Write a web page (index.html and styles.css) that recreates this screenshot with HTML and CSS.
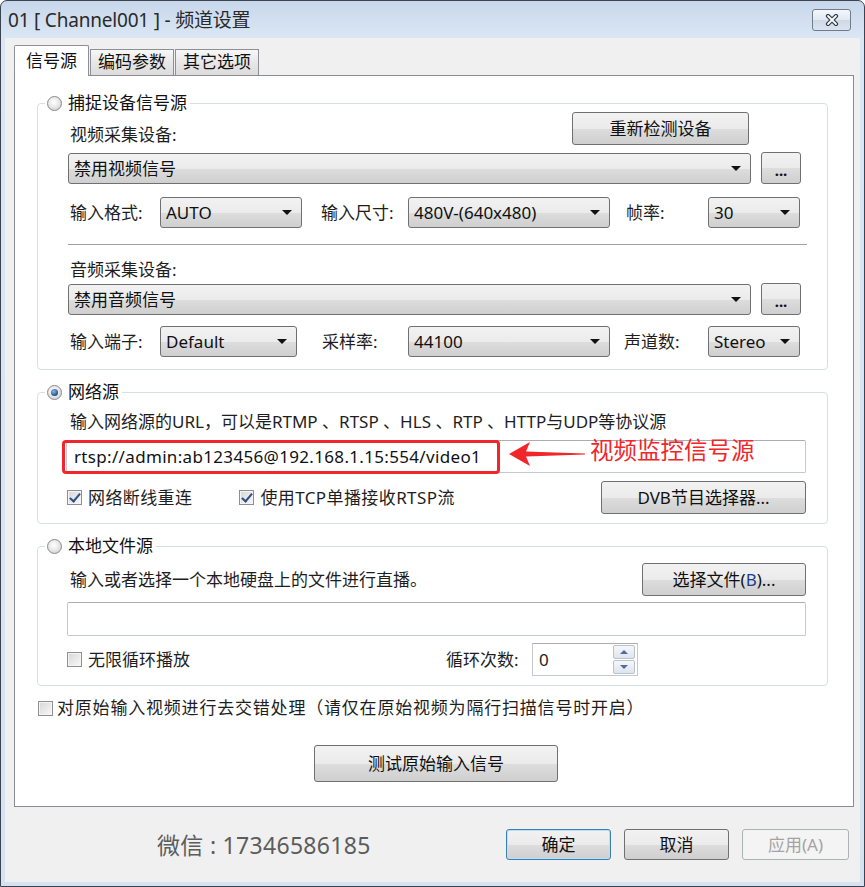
FILE: index.html
```html
<!DOCTYPE html>
<html lang="zh-CN">
<head>
  <meta charset="UTF-8" />
  <meta name="viewport" content="width=device-width, initial-scale=1.0"/>
  <title>01 [ Channel001 ] - 频道设置</title>
  <link rel="stylesheet" href="styles.css">
</head>
<body>

<div class="window">
  <div class="titlebar">
    <span class="title">01 [ Channel001 ] - 频道设置</span>
    <button class="close-btn">
      <svg width="14" height="12" viewBox="0 0 14 12">
        <path d="M3 2 L11 10 M11 2 L3 10" stroke="#2f3846" stroke-width="4.2" stroke-linecap="round"/>
        <path d="M3 2 L11 10 M11 2 L3 10" stroke="#ffffff" stroke-width="1.8" stroke-linecap="round"/>
      </svg>
    </button>
  </div>

  <div class="client">
    <div class="tabs">
      <div class="tab active">信号源</div>
      <div class="tab">编码参数</div>
      <div class="tab">其它选项</div>
    </div>

    <div class="panel">

      <!-- Capture device -->
      <fieldset class="group">
        <legend><span class="radio"></span>捕捉设备信号源</legend>
        <div class="group-body capture-body">
          <div class="head-row">
            <span>视频采集设备:</span>
            <button class="btn btn-detect">重新检测设备</button>
          </div>
          <div class="device-row">
            <div class="combo combo-wide">禁用视频信号</div>
            <button class="btn btn-more">...</button>
          </div>
          <div class="param-row">
            <span class="plabel pl-1">输入格式:</span>
            <div class="combo">AUTO</div>
            <span class="plabel pl-2">输入尺寸:</span>
            <div class="combo">480V-(640x480)</div>
            <span class="plabel pl-3">帧率:</span>
            <div class="combo">30</div>
          </div>

          <div class="separator"></div>

          <div class="sub-label">音频采集设备:</div>
          <div class="device-row audio-device">
            <div class="combo combo-wide">禁用音频信号</div>
            <button class="btn btn-more">...</button>
          </div>
          <div class="param-row">
            <span class="plabel pl-1">输入端子:</span>
            <div class="combo combo-short">Default</div>
            <span class="plabel pl-2b">采样率:</span>
            <div class="combo">44100</div>
            <span class="plabel pl-3b">声道数:</span>
            <div class="combo">Stereo</div>
          </div>
        </div>
      </fieldset>

      <!-- Network source -->
      <fieldset class="group group-gap">
        <legend><span class="radio checked"></span>网络源</legend>
        <div class="group-body net-body">
          <div class="hint">输入网络源的URL，可以是RTMP 、RTSP 、HLS 、RTP 、HTTP与UDP等协议源</div>
          <div class="url-wrap">
            <div class="textbox url-box">rtsp://admin:ab123456@192.168.1.15:554/video1</div>
            <div class="mark-box"></div>
            <svg class="mark-arrow" width="76" height="26" viewBox="0 0 76 26">
              <polygon points="0,13 21,1 17,10.5 76,12.4 76,13.6 17,15.5 21,25" fill="#f0262b"/>
            </svg>
            <span class="mark-text">视频监控信号源</span>
          </div>
          <div class="check-row">
            <label class="check-label"><span class="check checked"></span>网络断线重连</label>
            <label class="check-label tcp"><span class="check checked"></span>使用TCP单播接收RTSP流</label>
            <button class="btn btn-dvb">DVB节目选择器...</button>
          </div>
        </div>
      </fieldset>

      <!-- Local file -->
      <fieldset class="group group-gap">
        <legend><span class="radio"></span>本地文件源</legend>
        <div class="group-body net-body">
          <div class="file-row">
            <span class="hint-inline">输入或者选择一个本地硬盘上的文件进行直播。</span>
            <button class="btn btn-file">选择文件(<span class="accel">B</span>)...</button>
          </div>
          <div class="textbox file-box"></div>
          <div class="loop-row">
            <label class="check-label loop-check"><span class="check"></span>无限循环播放</label>
            <span class="loop-label">循环次数:</span>
            <div class="spin">
              <span class="spin-val">0</span>
              <span class="spin-btns">
                <span class="spin-btn"><span class="tri-up"></span></span>
                <span class="spin-btn"><span class="tri-down"></span></span>
              </span>
            </div>
          </div>
        </div>
      </fieldset>

      <label class="check-label deint"><span class="check"></span>对原始输入视频进行去交错处理（请仅在原始视频为隔行扫描信号时开启）</label>

      <button class="btn btn-test">测试原始输入信号</button>
    </div>

    <div class="footer">
      <span class="wechat">微信 : 17346586185</span>
      <button class="btn btn-foot btn-ok">确定</button>
      <button class="btn btn-foot">取消</button>
      <button class="btn btn-foot disabled">应用(A)</button>
    </div>
  </div>
</div>

</body>
</html>
```

FILE: styles.css
```css
body {
  margin: 0;
  font-family: "Noto Sans", "Noto Sans CJK SC", sans-serif;
  font-size: 17px;
  line-height: 20px;
  color: #1e1e1e;
  background: #ffffff;
}

.window {
  box-sizing: border-box;
  width: 865px;
  height: 887px;
  border: 1px solid #3b4350;
  border-radius: 7px 7px 0 0;
  background: linear-gradient(#c7d7eb, #dae6f3 36px, #d6e2ef);
  padding: 0 4px 4px;
  display: flex;
  flex-direction: column;
}

/* Title bar */
.titlebar {
  height: 37px;
  display: flex;
  align-items: center;
  justify-content: space-between;
  padding: 0 9px 0 3px;
}

.title {
  font-size: 19px;
  color: #2a2a2a;
  letter-spacing: -0.2px;
}

.close-btn {
  align-self: flex-start;
  margin-top: 8px;
  width: 39px;
  height: 22px;
  padding: 0;
  border: 1px solid #6e7c90;
  border-radius: 3px;
  background: linear-gradient(#f4f7fb, #e1e8f1 50%, #cfd9e6 51%, #dbe3ee);
  display: flex;
  align-items: center;
  justify-content: center;
}

/* Client area */
.client {
  flex: 1;
  background: #f0f0f0;
  padding: 7px 6px 0 9px;
  display: flex;
  flex-direction: column;
}

.tabs {
  display: flex;
  align-items: flex-end;
  height: 31px;
  margin-bottom: -1px;
  position: relative;
  z-index: 1;
}

.tab {
  box-sizing: border-box;
  height: 26px;
  margin-bottom: 1px;
  margin-left: 1px;
  padding: 0 7px;
  line-height: 24px;
  border: 1px solid #8c8f96;
  border-bottom: none;
  background: linear-gradient(#f7f7f7, #e6e6e6 55%, #dcdcdc);
  color: #111;
}

.tab.active {
  height: 31px;
  margin: 0;
  padding: 0 11px;
  line-height: 30px;
  background: #ffffff;
  border-radius: 2px 2px 0 0;
}

.panel {
  background: #ffffff;
  border: 1px solid #898c95;
  padding: 18px 25px 24px 22px;
  display: flex;
  flex-direction: column;
}

/* Group boxes */
.group {
  margin: 0;
  padding: 0;
  min-width: 0;
  border: 1px solid #d5dfe5;
  border-radius: 4px;
}

.group-gap {
  margin-top: 13px;
}

.group legend {
  margin-left: 7px;
  padding: 0 3px 0 2px;
  height: 18px;
  line-height: 18px;
  display: flex;
  align-items: center;
  gap: 6px;
  color: #111;
}

.radio {
  box-sizing: border-box;
  width: 15px;
  height: 15px;
  border-radius: 50%;
  border: 1px solid #8a8a8a;
  background: radial-gradient(circle at 45% 40%, #ffffff 0, #eaeaea 45%, #c4c4c4 100%);
  position: relative;
}

.radio.checked::after {
  content: "";
  position: absolute;
  left: 3px;
  top: 3px;
  width: 7px;
  height: 7px;
  border-radius: 50%;
  background: radial-gradient(circle at 40% 35%, #8fb8ea, #1f4f8c 70%);
}

.capture-body {
  padding: 0 26px 12px 30px;
}

.net-body {
  padding: 0 21px 9px 29px;
}

.head-row {
  display: flex;
  align-items: flex-end;
  justify-content: space-between;
  padding-right: 52px;
  padding-left: 2px;
}

.device-row {
  display: flex;
  align-items: center;
  margin-top: 7px;
}

.audio-device {
  margin-top: 3px;
}

.sub-label {
  margin-top: 13px;
  padding-left: 2px;
}

.param-row {
  display: grid;
  grid-template-columns: 92px 142px 106px 202px 98px 92px;
  align-items: center;
  margin-top: 13px;
}

.audio-device + .param-row {
  margin-top: 11px;
}

.plabel { white-space: nowrap; }
.pl-1 { padding-left: 2px; }
.pl-2 { padding-left: 19px; }
.pl-3 { padding-left: 16px; }
.pl-2b { padding-left: 20px; }
.pl-3b { padding-left: 14px; }

.separator {
  margin: 16px -6px 0 0;
  height: 1px;
  border-top: 1px solid #a0a0a0;
  border-bottom: 1px solid #ffffff;
}

/* Combo boxes */
.combo {
  box-sizing: border-box;
  height: 31px;
  line-height: 29px;
  padding: 0 24px 0 5px;
  border: 1px solid #707070;
  border-radius: 3px;
  background: linear-gradient(#f2f2f2, #ebebeb 50%, #dddddd 51%, #cfcfcf);
  position: relative;
  white-space: nowrap;
  overflow: hidden;
  color: #101010;
}

.combo::after {
  content: "";
  position: absolute;
  right: 9px;
  top: 12px;
  border-left: 5px solid transparent;
  border-right: 5px solid transparent;
  border-top: 5px solid #111;
}

.combo-wide {
  flex: 1;
}

.combo-short {
  width: 137px;
}

/* Buttons */
.btn {
  box-sizing: border-box;
  font: inherit;
  color: #111;
  border: 1px solid #707070;
  border-radius: 3px;
  background: linear-gradient(#f2f2f2, #ebebeb 50%, #dddddd 51%, #cfcfcf);
  padding: 0;
  cursor: pointer;
}

.btn-detect { width: 177px; height: 33px; }
.btn-more { width: 40px; height: 32px; margin-left: 10px; font-weight: bold; font-size: 15px; padding-top: 4px; }
.btn-dvb { width: 205px; height: 33px; margin-left: auto; }
.btn-file { width: 164px; height: 33px; margin-left: auto; }
.accel { color: #1d3f8a; }
.btn-test { width: 244px; height: 37px; margin: 27px 0 0 277px; }

/* Text boxes */
.textbox {
  box-sizing: border-box;
  background: #ffffff;
  border: 1px solid #c5c9d0;
  border-top-color: #abadb3;
  border-radius: 2px;
}

.hint {
  margin-top: 11px;
  padding-left: 3px;
  white-space: nowrap;
}

.url-wrap {
  position: relative;
  margin-top: 8px;
}

.url-box {
  height: 33px;
  line-height: 31px;
  padding-left: 7px;
  margin-left: -1px;
  color: #111;
  letter-spacing: 0.33px;
}

.mark-box {
  position: absolute;
  left: -5px;
  top: 0;
  width: 438px;
  height: 34px;
  box-sizing: border-box;
  border: 3px solid #f0262b;
  border-radius: 4px;
}

.mark-arrow {
  position: absolute;
  left: 442px;
  top: 1px;
}

.mark-text {
  position: absolute;
  left: 523px;
  top: -4px;
  font-size: 23.5px;
  line-height: 28px;
  color: #f0262b;
  white-space: nowrap;
}

/* Check boxes */
.check-row {
  display: flex;
  align-items: center;
  margin-top: 8px;
}

.check-label {
  display: flex;
  align-items: center;
  gap: 6px;
  white-space: nowrap;
}

.check-label.tcp {
  margin-left: 47px;
}

.check-row .check-label {
  letter-spacing: 0.4px;
}

.check {
  box-sizing: border-box;
  width: 15px;
  height: 15px;
  border: 1px solid #8e8f8f;
  background: linear-gradient(135deg, #d6d6d6, #f9f9f9);
  box-shadow: inset 0 0 0 1px #f4f4f4;
  position: relative;
  flex: none;
}

.check.checked::after {
  content: "";
  position: absolute;
  left: 4px;
  top: 0px;
  width: 4px;
  height: 9px;
  border-right: 2px solid #2e4f88;
  border-bottom: 2px solid #2e4f88;
  transform: rotate(40deg);
}

/* Local file */
.file-row {
  display: flex;
  align-items: center;
  margin-top: 8px;
}

.hint-inline {
  padding-left: 3px;
}

.file-box {
  height: 34px;
  margin-top: 6px;
}

.loop-row {
  display: flex;
  align-items: center;
  margin-top: 7px;
}

.loop-check {
  width: 379px;
}

.loop-label {
  width: 86px;
}

.spin {
  box-sizing: border-box;
  width: 106px;
  height: 33px;
  border: 1px solid #c5c9d0;
  border-top-color: #abadb3;
  background: #ffffff;
  display: flex;
  align-items: center;
  justify-content: space-between;
  padding: 1px 2px 1px 6px;
}

.spin-btns {
  display: flex;
  flex-direction: column;
  gap: 1px;
  height: 100%;
}

.spin-btn {
  box-sizing: border-box;
  width: 22px;
  flex: 1;
  border: 1px solid #b8c1cc;
  border-radius: 2px;
  background: linear-gradient(#f5f7fa, #dfe5ec);
  display: flex;
  align-items: center;
  justify-content: center;
}

.tri-up {
  border-left: 4px solid transparent;
  border-right: 4px solid transparent;
  border-bottom: 4px solid #4d6d9c;
}

.tri-down {
  border-left: 4px solid transparent;
  border-right: 4px solid transparent;
  border-top: 4px solid #4d6d9c;
}

.deint {
  margin-top: 12px;
  margin-left: 1px;
  gap: 4px;
  letter-spacing: 0.8px;
}

/* Footer */
.footer {
  display: flex;
  align-items: center;
  height: 31px;
  margin-top: 22px;
  padding: 0 5px 0 143px;
}

.wechat {
  flex: 1;
  font-size: 23px;
  letter-spacing: 0.3px;
  color: #5c5c5c;
}

.btn-foot {
  width: 105px;
  height: 31px;
  margin-left: 13px;
}

.btn-foot.disabled {
  width: 107px;
}

.btn-ok {
  border-color: #3c7fb1;
  box-shadow: inset 0 0 0 1px #b7dff5;
}

.btn-foot.disabled {
  color: #a3a3a3;
  border-color: #adb2b5;
  background: #f4f4f4;
}
```
